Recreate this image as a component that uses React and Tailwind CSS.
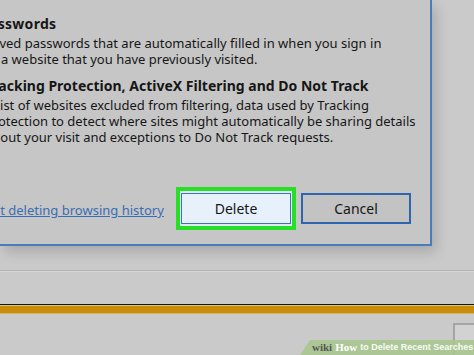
import React from 'react'

const bodyLines = [
  'Saved passwords that are automatically filled in when you sign in',
  'to a website that you have previously visited.',
]

const trackingLines = [
  'A list of websites excluded from filtering, data used by Tracking',
  'Protection to detect where sites might automatically be sharing details',
  'about your visit and exceptions to Do Not Track requests.',
]

const App = () => {
  return (
    <div className="relative w-[474px] h-[355px] overflow-hidden bg-[#cacaca] font-['Noto_Sans',sans-serif] text-[#161616]">
      {/* dialog */}
      <div className="w-[432px] h-[246px] bg-[#c6c6c6] border-r-2 border-b-2 border-[#4a7cba] shadow-[4px_6px_12px_rgba(0,0,0,0.16)] flex flex-col">
        <div className="-ml-[15px] pt-[16px] text-[13px] leading-[16px] whitespace-nowrap">
          <p className="-ml-[5px] font-bold text-[14px] tracking-[0.3px]">Passwords</p>
          <div className="mt-[3px]">
            {bodyLines.map((line) => (
              <p key={line}>{line}</p>
            ))}
          </div>
          <p className="mt-[11px] font-bold text-[14px]">Tracking Protection, ActiveX Filtering and Do Not Track</p>
          <div className="mt-[3px]">
            {trackingLines.map((line) => (
              <p key={line}>{line}</p>
            ))}
          </div>
        </div>

        {/* button row */}
        <div className="mt-[42px] flex items-center pr-[19px]">
          <a className="-ml-[32px] mt-[5px] text-[13px] text-[#3a6db3] underline whitespace-nowrap">About deleting browsing history</a>
          <div className="flex-1" />
          <div className="border-4 border-[#27e025] px-px py-[2px] bg-[#dfeaf4]">
            <button className="w-[110px] h-[31px] border border-[#3d74b8] bg-[#e7f1fb] text-[14px] text-[#161616]">Delete</button>
          </div>
          <button className="ml-[5px] w-[110px] h-[31px] border-2 border-[#2d66ae] bg-[#c3c3c3] text-[14px] text-[#161616]">Cancel</button>
        </div>
      </div>

      {/* page below the dialog */}
      <div className="mt-[24px] h-px bg-[#b3b3b3]" />
      <div className="h-px bg-[#d6d6d6]" />
      <div className="mt-[32px] h-px bg-[#141414]" />
      <div className="h-px bg-[#e0c873]" />
      <div className="h-[7px] bg-[#c98d0b]" />
      <div className="h-px bg-[#d6b560]" />
      <div className="mt-[9px] flex justify-end">
        <div className="w-[21px] h-[40px] border-l-2 border-t-2 border-[#a4a4a4] bg-[#d2d2d2]" />
      </div>

      {/* watermark */}
      <div className="absolute right-0 bottom-0 h-[15px] w-[174px] bg-[#a9c78f]/90 [clip-path:polygon(10px_0,100%_0,100%_100%,0_100%)] flex items-center pl-[12px] whitespace-nowrap">
        <span className="font-['Liberation_Serif',serif] font-bold text-[11px] text-[#555555]">wiki</span>
        <span className="ml-[3px] font-['Liberation_Serif',serif] font-bold text-[11px] text-white">How</span>
        <span className="ml-[3px] font-['Liberation_Sans',sans-serif] font-bold text-[9px] text-white/90">to Delete Recent Searches</span>
      </div>
    </div>
  )
}

export default App
